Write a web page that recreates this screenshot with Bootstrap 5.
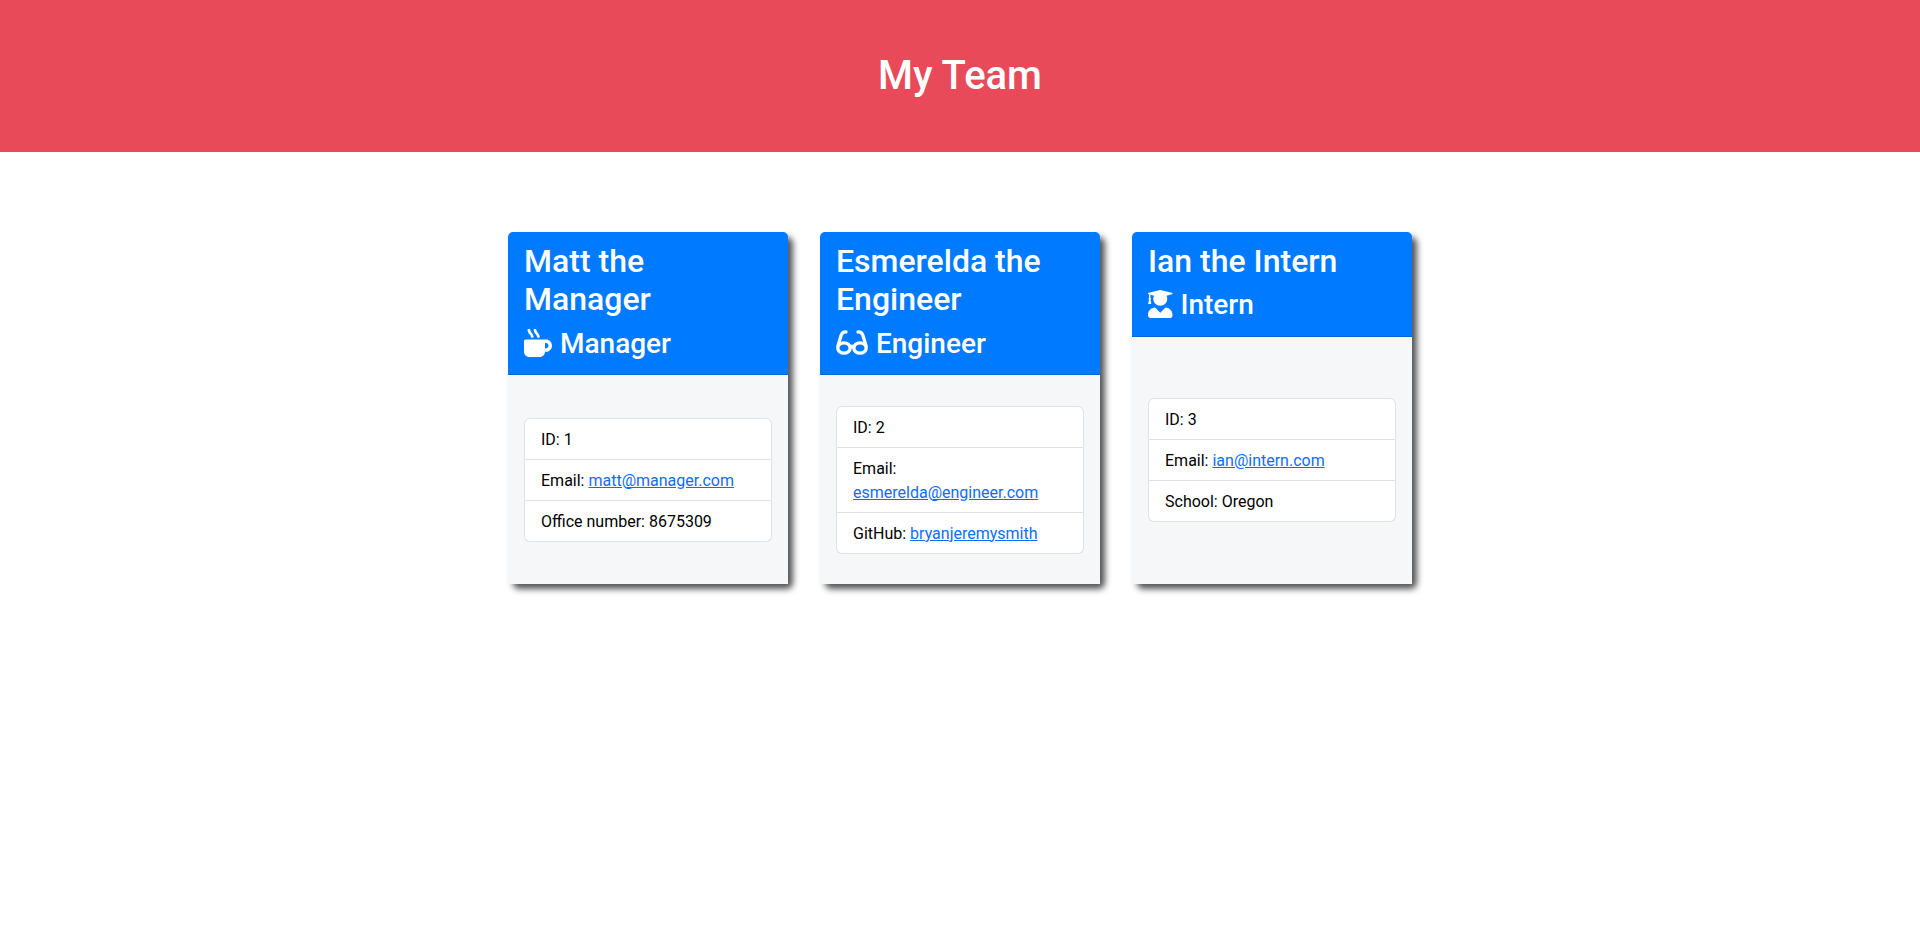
<!doctype html>
<html lang="en">
<head>
<meta charset="utf-8">
<title>My Team</title>
<link rel="stylesheet" href="https://cdn.jsdelivr.net/npm/bootstrap@5.3.0/dist/css/bootstrap.min.css">
<style>
body { font-family: Roboto, "Noto Sans", sans-serif; color: #000; }
.team-head { background: #e84a5a; height: 152px; margin-bottom: 80px; }
.team-head h1 { font-size: 40px; line-height: 48px; font-weight: 550; }
.team-row { gap: 32px; padding-bottom: 80px; }
.team-card { width: 280px; border-width: 0; box-shadow: 5px 5px 6px #555; }
.team-card .card-header { background: #007bff; padding: 10px 16px 14px; border-bottom: 1px solid #0069d9; }
.team-name { font-size: 32px; line-height: 38.4px; font-weight: 550; }
.team-role { font-size: 28px; line-height: 33.6px; font-weight: 550; }
.team-ico { height: 28px; width: auto; fill: #fff; vertical-align: -4px; margin-right: 1px; }
.team-ico-line { width: 32px; height: 25px; fill: none; stroke: #fff; stroke-width: 3.3; stroke-linecap: round; vertical-align: -2.25px; margin-right: 1px; }
.team-body { background: #f6f7f9; padding: 30.2px 16px; }
.team-body .list-group-item { padding: 9px 16px 7px; color: #000; }
</style>
</head>
<body>
<header class="team-head d-flex align-items-center justify-content-center text-white">
  <h1 class="m-0">My Team</h1>
</header>
<main class="d-flex justify-content-center team-row">
  <div class="card team-card">
    <div class="card-header text-white">
      <h2 class="team-name mb-2">Matt the Manager</h2>
      <h3 class="team-role mb-0"><svg class="team-ico" viewBox="0 0 512 512"><path d="M127.1 146.5c1.3 7.7 8 13.5 16 13.5h16.5c9.8 0 17.6-8.5 16.3-18-3.8-28.2-16.4-54.2-36.6-74.7-14.4-14.7-23.6-33.3-26.4-53.5C111.8 5.9 105 0 96.8 0H80.4C70.6 0 63 8.5 64.1 18c3.9 31.9 18 61.3 40.6 84.4 12 12.2 19.7 27.5 22.4 44.1zm112 0c1.3 7.7 8 13.5 16 13.5h16.5c9.8 0 17.6-8.5 16.3-18-3.8-28.2-16.4-54.2-36.6-74.7-14.4-14.7-23.6-33.3-26.4-53.5C223.8 5.9 217 0 208.8 0h-16.4c-9.8 0-17.5 8.5-16.3 18 3.9 31.9 18 61.3 40.6 84.4 12 12.2 19.7 27.5 22.4 44.1zM400 192H32c-17.7 0-32 14.3-32 32v192c0 53 43 96 96 96h192c53 0 96-43 96-96h16c61.8 0 112-50.2 112-112s-50.2-112-112-112zm0 160h-16v-96h16c26.5 0 48 21.5 48 48s-21.5 48-48 48z"/></svg> Manager</h3>
    </div>
    <div class="card-body team-body d-flex flex-column justify-content-center">
      <ul class="list-group">
        <li class="list-group-item">ID: 1</li>
        <li class="list-group-item">Email: <a href="#">matt@manager.com</a></li>
        <li class="list-group-item">Office number: 8675309</li>
      </ul>
    </div>
  </div>
  <div class="card team-card">
    <div class="card-header text-white">
      <h2 class="team-name mb-2">Esmerelda the Engineer</h2>
      <h3 class="team-role mb-0"><svg class="team-ico-line" viewBox="0 0 32 25"><path d="M10 1.8C7.2 1.6 6 2.8 5.2 5L1.9 16"/><ellipse cx="8" cy="18" rx="6.2" ry="5.2"/><path d="M22 1.8C24.8 1.6 26 2.8 26.8 5L30.1 16"/><ellipse cx="24" cy="18" rx="6.2" ry="5.2"/><path d="M14 16.5H18"/></svg> Engineer</h3>
    </div>
    <div class="card-body team-body d-flex flex-column justify-content-center">
      <ul class="list-group">
        <li class="list-group-item">ID: 2</li>
        <li class="list-group-item">Email: <a href="#">esmerelda@engineer.com</a></li>
        <li class="list-group-item">GitHub: <a href="#">bryanjeremysmith</a></li>
      </ul>
    </div>
  </div>
  <div class="card team-card">
    <div class="card-header text-white">
      <h2 class="team-name mb-2">Ian the Intern</h2>
      <h3 class="team-role mb-0"><svg class="team-ico" viewBox="0 0 448 512"><path d="M319.4 320.6L224 416l-95.4-95.4C57.1 323.7 0 382.2 0 454.4v9.6c0 26.5 21.5 48 48 48h352c26.5 0 48-21.5 48-48v-9.6c0-72.2-57.1-130.7-128.6-133.8zM13.6 79.8l6.4 1.5v58.4c-7 4.2-12 11.5-12 20.3 0 8.4 4.6 15.4 11.1 19.7L3.5 242c-1.7 6.9 2.1 14 7.6 14h41.8c5.5 0 9.3-7.1 7.6-14l-15.6-62.3C51.4 175.4 56 168.4 56 160c0-8.8-5-16.1-12-20.3V87.1l66 15.9c-8.6 17.2-14 36.4-14 57 0 70.7 57.3 128 128 128s128-57.3 128-128c0-20.6-5.3-39.8-14-57l96.3-23.2c18.2-4.4 18.2-27.1 0-31.5l-190.4-46c-13-3.1-26.7-3.1-39.7 0L13.6 48.2c-18.1 4.4-18.1 27.2 0 31.6z"/></svg> Intern</h3>
    </div>
    <div class="card-body team-body d-flex flex-column justify-content-center">
      <ul class="list-group">
        <li class="list-group-item">ID: 3</li>
        <li class="list-group-item">Email: <a href="#">ian@intern.com</a></li>
        <li class="list-group-item">School: Oregon</li>
      </ul>
    </div>
  </div>
</main>
<script src="https://cdn.jsdelivr.net/npm/bootstrap@5.3.0/dist/js/bootstrap.bundle.min.js"></script>
</body>
</html>
